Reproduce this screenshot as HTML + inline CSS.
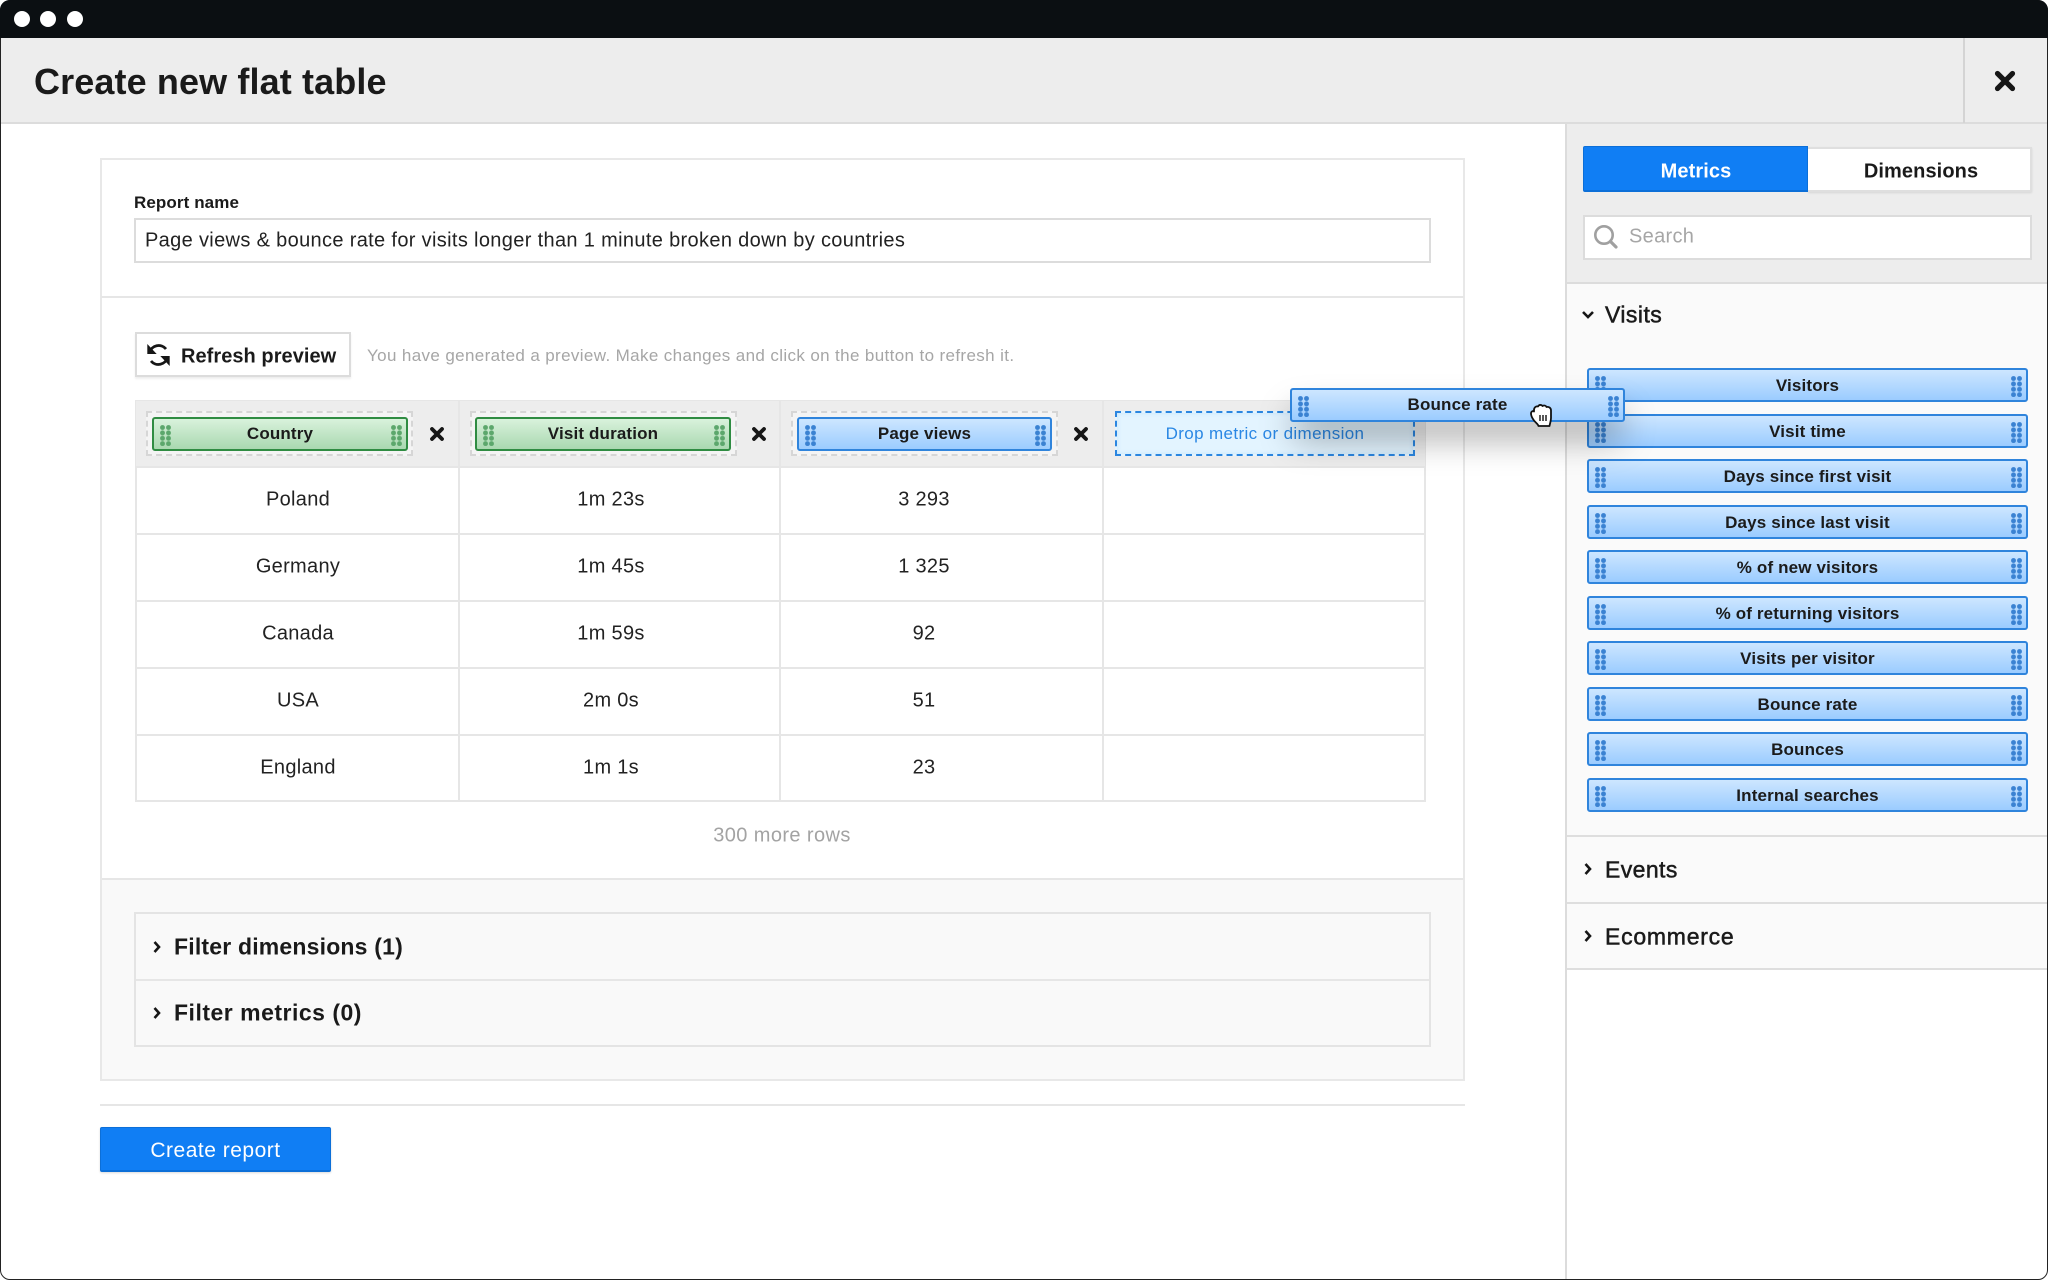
<!DOCTYPE html>
<html><head><meta charset="utf-8"><title>Create new flat table</title>
<style>
*{box-sizing:border-box}
html,body{margin:0;padding:0;background:#fff}
#p{position:relative;width:2048px;height:1280px;overflow:hidden;background:#fff;font-family:"Liberation Sans",sans-serif;color:#1a1a1a}
#p div,#p svg{position:absolute}
.c{transform:translate(-50%,-50%);white-space:nowrap}
.l{transform:translateY(-50%);white-space:nowrap}
.td{font-size:20px;letter-spacing:.3px;color:#222}
.pill{height:34px;border-radius:3px;border:2px solid #2f84dc;background:linear-gradient(#cde6ff,#9bccff);font-weight:bold;font-size:17px;text-align:center;line-height:31px;color:#1b1b1b;letter-spacing:.15px}
.green{border-color:#2f8c42;background:linear-gradient(#d9f2dc,#a9d8b0)}
.g{top:5.500px;width:11px;height:21px;background:radial-gradient(circle at 2.5px 2.5px,#3a82d2 2.1px,rgba(58,130,210,0) 2.8px) 0 0/6px 5.4px}
.green .g{background:radial-gradient(circle at 2.5px 2.5px,#5ca76c 2.1px,rgba(92,167,108,0) 2.8px) 0 0/6px 5.4px}
.gl{left:6px}.gr{right:4px}
.dash{width:267px;height:45px;top:411px;border:2px dashed #d6d6d6;background:#f4f4f4}
.h{font-size:23px;font-weight:bold}
.ln{background:#e6e6e6}
</style></head><body><div id="p">

<div style="left:0;top:0;width:2048px;height:1280px;border:1.5px solid #222;border-radius:10px;background:#fff"></div>
<div style="left:0;top:0;width:2048px;height:38px;background:#0b0f12;border-radius:10px 10px 0 0"></div>
<div style="left:14px;top:11px;width:16px;height:16px;border-radius:50%;background:#fff"></div>
<div style="left:40px;top:11px;width:16px;height:16px;border-radius:50%;background:#fff"></div>
<div style="left:67px;top:11px;width:16px;height:16px;border-radius:50%;background:#fff"></div>

<!-- header -->
<div style="left:1px;top:38px;width:2046px;height:86px;background:#ededed;border-bottom:2px solid #dcdcdc"></div>
<div class="l" style="left:34px;top:82px;font-size:36px;font-weight:bold;letter-spacing:.12px">Create new flat table</div>
<div style="left:1963px;top:38px;width:2px;height:85px;background:#d4d4d4"></div>
<svg style="left:1994px;top:70px" width="22" height="22" viewBox="0 0 22 22"><path d="M3.5 3.5L18.5 18.5M18.5 3.5L3.5 18.5" stroke="#161616" stroke-width="5.2" stroke-linecap="round"/></svg>

<!-- main card -->
<div style="left:100px;top:158px;width:1365px;height:923px;border:2px solid #e8e8e8;background:#fff"></div>
<div class="l" style="left:134px;top:203px;font-size:17px;font-weight:bold;letter-spacing:.1px">Report name</div>
<div style="left:134px;top:218px;width:1297px;height:45px;border:2px solid #dcdcdc;background:#fff"></div>
<div class="l" style="left:145px;top:241px;font-size:20px;letter-spacing:.34px;color:#222">Page views &amp; bounce rate for visits longer than 1 minute broken down by countries</div>
<div class="ln" style="left:101px;top:296px;width:1363px;height:2px"></div>

<!-- refresh -->
<div style="left:135px;top:332px;width:216px;height:45px;border:2px solid #dcdcdc;background:#fff;box-shadow:0 2px 2px rgba(0,0,0,.07)"></div>
<svg style="left:146px;top:342px" width="25" height="26" viewBox="0 0 25 26"><path d="M3.5 10.500A9.500 9.500 0 0 1 20 7" fill="none" stroke="#161616" stroke-width="2.8"/><path d="M21.500 15.500A9.500 9.500 0 0 1 5 19" fill="none" stroke="#161616" stroke-width="2.8"/><path d="M1.300 2V12H10.700Z" fill="#161616"/><path d="M23.700 24V14H14.300Z" fill="#161616"/></svg>
<div class="l" style="left:181px;top:357px;font-size:20px;font-weight:bold;letter-spacing:.05px">Refresh preview</div>
<div class="l" style="left:367px;top:356px;font-size:17px;letter-spacing:.37px;color:#a6a6a6">You have generated a preview. Make changes and click on the button to refresh it.</div>

<!-- table -->
<div style="left:135px;top:400px;width:1291px;height:402px;border:2px solid #e6e6e6;background:#fff"></div>
<div style="left:136px;top:401px;width:1289px;height:67px;background:#ededed;border-bottom:2px solid #e6e6e6"></div>
<div class="ln" style="left:458px;top:401px;width:2px;height:400px"></div>
<div class="ln" style="left:779px;top:401px;width:2px;height:400px"></div>
<div class="ln" style="left:1102px;top:401px;width:2px;height:400px"></div>
<div class="ln" style="left:136px;top:533px;width:1289px;height:2px"></div>
<div class="ln" style="left:136px;top:600px;width:1289px;height:2px"></div>
<div class="ln" style="left:136px;top:667px;width:1289px;height:2px"></div>
<div class="ln" style="left:136px;top:734px;width:1289px;height:2px"></div>

<div class="dash" style="left:146px"></div>
<div class="pill green" style="left:152px;top:417px;width:256px;line-height:30px"><div class="g gl"></div>Country<div class="g gr"></div></div>
<svg style="left:429px;top:426px" width="16" height="16" viewBox="0 0 16 16"><path d="M3 3L13 13M13 3L3 13" stroke="#161616" stroke-width="3.8" stroke-linecap="round"/></svg>

<div class="dash" style="left:470px"></div>
<div class="pill green" style="left:475px;top:417px;width:256px;line-height:30px"><div class="g gl"></div>Visit duration<div class="g gr"></div></div>
<svg style="left:751px;top:426px" width="16" height="16" viewBox="0 0 16 16"><path d="M3 3L13 13M13 3L3 13" stroke="#161616" stroke-width="3.8" stroke-linecap="round"/></svg>

<div class="dash" style="left:791px"></div>
<div class="pill" style="left:797px;top:417px;width:255px;line-height:30px"><div class="g gl"></div>Page views<div class="g gr"></div></div>
<svg style="left:1073px;top:426px" width="16" height="16" viewBox="0 0 16 16"><path d="M3 3L13 13M13 3L3 13" stroke="#161616" stroke-width="3.8" stroke-linecap="round"/></svg>

<div style="left:1115px;top:411px;width:300px;height:45px;border:2px dashed #2b86e0;background:#e3f4ff;box-shadow:inset 0 0 5px #c3e4fb"></div>
<div class="c" style="left:1265px;top:434px;font-size:17px;letter-spacing:.37px;color:#2a87e4">Drop metric or dimension</div>

<div class="td c" style="left:298px;top:500px">Poland</div><div class="td c" style="left:611px;top:500px">1m 23s</div><div class="td c" style="left:924px;top:500px">3 293</div>
<div class="td c" style="left:298px;top:567px">Germany</div><div class="td c" style="left:611px;top:567px">1m 45s</div><div class="td c" style="left:924px;top:567px">1 325</div>
<div class="td c" style="left:298px;top:634px">Canada</div><div class="td c" style="left:611px;top:634px">1m 59s</div><div class="td c" style="left:924px;top:634px">92</div>
<div class="td c" style="left:298px;top:701px">USA</div><div class="td c" style="left:611px;top:701px">2m 0s</div><div class="td c" style="left:924px;top:701px">51</div>
<div class="td c" style="left:298px;top:768px">England</div><div class="td c" style="left:611px;top:768px">1m 1s</div><div class="td c" style="left:924px;top:768px">23</div>

<div class="c" style="left:782px;top:836px;font-size:20px;letter-spacing:.4px;color:#a3a3a3">300 more rows</div>

<!-- filters -->
<div style="left:102px;top:878px;width:1361px;height:201px;background:#f9f9f9;border-top:2px solid #e6e6e6"></div>
<div style="left:134px;top:912px;width:1297px;height:135px;border:2px solid #e4e4e4"></div>
<div class="ln" style="left:136px;top:979px;width:1293px;height:2px"></div>
<svg style="left:152px;top:939px" width="10" height="16" viewBox="0 0 10 16"><path d="M2.500 3L7 8L2.500 13" fill="none" stroke="#161616" stroke-width="2.6"/></svg>
<div class="l h" style="left:174px;top:947px;letter-spacing:.19px">Filter dimensions (1)</div>
<svg style="left:152px;top:1005px" width="10" height="16" viewBox="0 0 10 16"><path d="M2.500 3L7 8L2.500 13" fill="none" stroke="#161616" stroke-width="2.6"/></svg>
<div class="l h" style="left:174px;top:1013px;letter-spacing:.5px">Filter metrics (0)</div>

<div class="ln" style="left:100px;top:1104px;width:1365px;height:2px"></div>
<div style="left:100px;top:1127px;width:231px;height:45px;background:#107ef4;border:1px solid #0c6fd8;border-bottom-width:2px;border-radius:2px;box-shadow:0 1px 2px rgba(0,0,0,.15)"></div>
<div class="c" style="left:215.500px;top:1151px;font-size:21px;letter-spacing:.5px;color:#fff">Create report</div>

<!-- sidebar -->
<div style="left:1565px;top:124px;width:2px;height:1155px;background:#dcdcdc"></div>
<div style="left:1567px;top:124px;width:480px;height:160px;background:#ededed;border-bottom:2px solid #dcdcdc"></div>
<div style="left:1567px;top:284px;width:480px;height:686px;background:#fafafa"></div>
<div style="left:1567px;top:835px;width:480px;height:2px;background:#dedede"></div>
<div style="left:1567px;top:902px;width:480px;height:2px;background:#dedede"></div>
<div style="left:1567px;top:968px;width:480px;height:2px;background:#dedede"></div>

<div style="left:1808px;top:147px;width:224px;height:45px;background:#fff;border:2px solid #dfdfdf;border-left:0;box-shadow:0 1px 2px rgba(0,0,0,.1)"></div>
<div style="left:1583px;top:146px;width:225px;height:46px;background:#107ef4;border:1px solid #0c6fd8;border-bottom-width:2px;border-radius:2px 0 0 2px"></div>
<div class="c" style="left:1696px;top:171.500px;font-size:20px;font-weight:bold;letter-spacing:.1px;color:#fff">Metrics</div>
<div class="c" style="left:1921px;top:171.500px;font-size:20px;font-weight:bold;letter-spacing:.1px">Dimensions</div>

<div style="left:1583px;top:215px;width:449px;height:45px;background:#fff;border:2px solid #dcdcdc"></div>
<svg style="left:1593px;top:224px" width="26" height="26" viewBox="0 0 26 26"><circle cx="11" cy="11" r="8.700" fill="none" stroke="#a0a0a0" stroke-width="2.6"/><path d="M17.500 17.500L23 23" stroke="#a0a0a0" stroke-width="3.2" stroke-linecap="round"/></svg>
<div class="l" style="left:1629px;top:237px;font-size:20px;letter-spacing:.3px;color:#a6a6a6">Search</div>

<svg style="left:1580px;top:309px" width="16" height="12" viewBox="0 0 16 12"><path d="M3 3L8 8L13 3" fill="none" stroke="#161616" stroke-width="2.6"/></svg>
<div class="l" style="left:1605px;top:315px;font-size:23px;letter-spacing:.45px;-webkit-text-stroke:.5px #1a1a1a">Visits</div>

<div class="pill" style="left:1587px;top:368px;width:441px"><div class="g gl"></div>Visitors<div class="g gr"></div></div>
<div class="pill" style="left:1587px;top:414px;width:441px"><div class="g gl"></div>Visit time<div class="g gr"></div></div>
<div class="pill" style="left:1587px;top:459px;width:441px"><div class="g gl"></div>Days since first visit<div class="g gr"></div></div>
<div class="pill" style="left:1587px;top:505px;width:441px"><div class="g gl"></div>Days since last visit<div class="g gr"></div></div>
<div class="pill" style="left:1587px;top:550px;width:441px"><div class="g gl"></div>% of new visitors<div class="g gr"></div></div>
<div class="pill" style="left:1587px;top:596px;width:441px"><div class="g gl"></div>% of returning visitors<div class="g gr"></div></div>
<div class="pill" style="left:1587px;top:641px;width:441px"><div class="g gl"></div>Visits per visitor<div class="g gr"></div></div>
<div class="pill" style="left:1587px;top:687px;width:441px"><div class="g gl"></div>Bounce rate<div class="g gr"></div></div>
<div class="pill" style="left:1587px;top:732px;width:441px"><div class="g gl"></div>Bounces<div class="g gr"></div></div>
<div class="pill" style="left:1587px;top:778px;width:441px"><div class="g gl"></div>Internal searches<div class="g gr"></div></div>

<svg style="left:1583px;top:861px" width="10" height="16" viewBox="0 0 10 16"><path d="M2.500 3L7 8L2.500 13" fill="none" stroke="#161616" stroke-width="2.6"/></svg>
<div class="l" style="left:1605px;top:869.500px;font-size:23px;letter-spacing:.4px;-webkit-text-stroke:.5px #1a1a1a">Events</div>
<svg style="left:1583px;top:928px" width="10" height="16" viewBox="0 0 10 16"><path d="M2.500 3L7 8L2.500 13" fill="none" stroke="#161616" stroke-width="2.6"/></svg>
<div class="l" style="left:1605px;top:936.500px;font-size:23px;letter-spacing:.75px;-webkit-text-stroke:.5px #1a1a1a">Ecommerce</div>

<!-- dragged pill -->
<div class="pill" style="left:1290px;top:388px;width:335px;line-height:30px;box-shadow:0 20px 34px -4px rgba(0,0,0,.36)"><div class="g gl"></div>Bounce rate<div class="g gr"></div></div>
<svg style="left:1529px;top:402px" width="24" height="27" viewBox="0 0 24 27"><path d="M5 8C5 5 7.500 4 9 4.500C10 2.500 12.500 2.500 13.500 4C15 3 17 3.500 17.500 5C20 4.500 22 6 22 8.500V16C22 19 21 21 20.500 24H9.500C9 22 7 21 5 18.500C3.500 16.500 2 13.500 2 11.500C2 9.500 4 8.500 5 9.500Z" fill="#fff" stroke="#111" stroke-width="1.8" stroke-linejoin="round"/><path d="M11 13V19M14 13V19M17 13V19" stroke="#111" stroke-width="1.4"/></svg>

</div></body></html>
